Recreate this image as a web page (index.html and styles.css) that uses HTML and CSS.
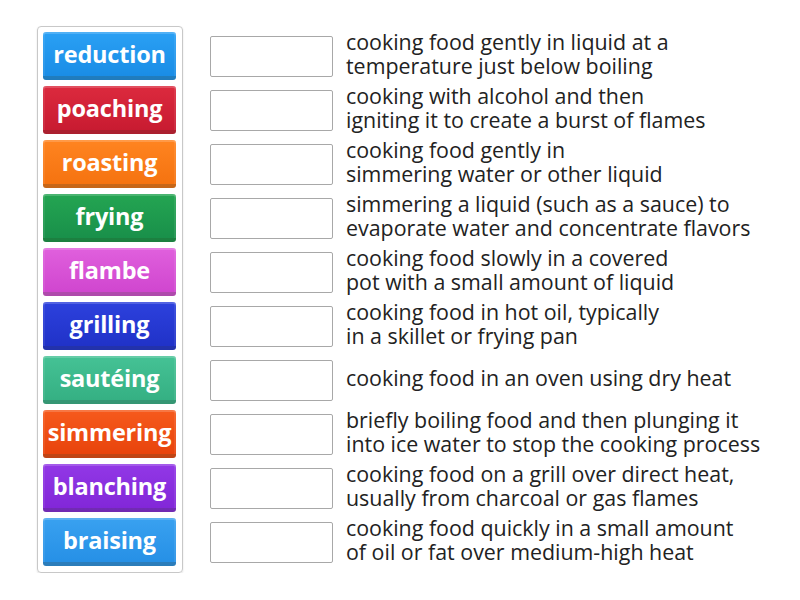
FILE: index.html
```html
<!DOCTYPE html>
<html>
<head>
<meta charset="utf-8">
<link rel="stylesheet" href="styles.css">
</head>
<body>
<div class="game">
  <div class="tiles">
    <div class="tile c1">reduction</div>
    <div class="tile c2">poaching</div>
    <div class="tile c3">roasting</div>
    <div class="tile c4">frying</div>
    <div class="tile c5">flambe</div>
    <div class="tile c6">grilling</div>
    <div class="tile c7">sautéing</div>
    <div class="tile c8">simmering</div>
    <div class="tile c9">blanching</div>
    <div class="tile c10">braising</div>
  </div>
  <div class="rows">
    <div class="row"><div class="slot"></div><div class="desc">cooking food gently in liquid at a<br>temperature just below boiling</div></div>
    <div class="row"><div class="slot"></div><div class="desc">cooking with alcohol and then<br>igniting it to create a burst of flames</div></div>
    <div class="row"><div class="slot"></div><div class="desc">cooking food gently in<br>simmering water or other liquid</div></div>
    <div class="row"><div class="slot"></div><div class="desc">simmering a liquid (such as a sauce) to<br>evaporate water and concentrate flavors</div></div>
    <div class="row"><div class="slot"></div><div class="desc">cooking food slowly in a covered<br>pot with a small amount of liquid</div></div>
    <div class="row"><div class="slot"></div><div class="desc">cooking food in hot oil, typically<br>in a skillet or frying pan</div></div>
    <div class="row"><div class="slot"></div><div class="desc">cooking food in an oven using dry heat</div></div>
    <div class="row"><div class="slot"></div><div class="desc">briefly boiling food and then plunging it<br>into ice water to stop the cooking process</div></div>
    <div class="row"><div class="slot"></div><div class="desc">cooking food on a grill over direct heat,<br>usually from charcoal or gas flames</div></div>
    <div class="row"><div class="slot"></div><div class="desc">cooking food quickly in a small amount<br>of oil or fat over medium-high heat</div></div>
  </div>
</div>
</body>
</html>
```

FILE: styles.css
```css
html, body {
  margin: 0;
  padding: 0;
  background: #ffffff;
}
body {
  font-family: "Open Sans", "Liberation Sans", sans-serif;
}
.game {
  display: flex;
  align-items: flex-start;
  padding: 26px 0 0 37px;
}
.tiles {
  display: flex;
  flex-direction: column;
  gap: 6px;
  padding: 5px 6px 6px 5px;
  border: 1px solid #c8c8c8;
  border-radius: 4px;
  box-shadow: 0 1px 2px rgba(0,0,0,0.12);
}
.tile {
  width: 133px;
  height: 48px;
  box-sizing: border-box;
  border-radius: 3px;
  display: flex;
  align-items: center;
  justify-content: center;
  color: #ffffff;
  font-weight: 700;
  font-size: 23.5px;
  letter-spacing: -0.2px;
  border-bottom: 4px solid rgba(0,0,0,0.22);
  box-shadow: inset 0 2px 0 rgba(255,255,255,0.18), inset 2px 0 0 rgba(255,255,255,0.08), inset -2px 0 0 rgba(255,255,255,0.08);
}
.c1 { background: linear-gradient(#2aa0f4, #1a8de6); }
.c2 { background: linear-gradient(#dc2a3e, #c81b31); }
.c3 { background: linear-gradient(#ff8420, #f57310); }
.c4 { background: linear-gradient(#24a552, #19904a); }
.c5 { background: linear-gradient(#e060dd, #d046cf); }
.c6 { background: linear-gradient(#2d41dd, #2032c8); }
.c7 { background: linear-gradient(#45c295, #35b083); }
.c8 { background: linear-gradient(#f65a1c, #e8440c); }
.c9 { background: linear-gradient(#9238e6, #8227d8); }
.c10 { background: linear-gradient(#39a1f0, #2690e6); }
.rows {
  display: flex;
  flex-direction: column;
  padding-top: 3px;
  margin-left: 27px;
}
.row {
  height: 54px;
  display: flex;
  align-items: center;
  gap: 13px;
}
.slot {
  width: 123px;
  height: 41px;
  box-sizing: border-box;
  border: 1px solid #a8a8a8;
  border-radius: 2px;
  background: #ffffff;
}
.desc {
  font-size: 21.4px;
  line-height: 24px;
  color: #222222;
  white-space: nowrap;
  margin-bottom: 4px;
}
```
